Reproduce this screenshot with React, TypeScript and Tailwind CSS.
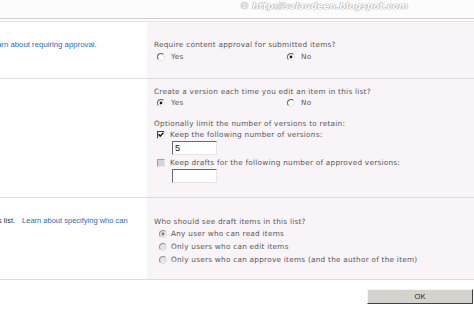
import React from "react";

function Radio({ checked, disabled }: { checked?: boolean; disabled?: boolean }) {
  const dark = disabled ? "#9a9a9a" : "#6f6f6f";
  const dot = disabled ? "#7a7a7a" : "#1a1a1a";
  return (
    <svg width="8" height="8" viewBox="0 0 8 8" className="shrink-0">
      <circle cx="4" cy="4" r="3.5" fill={disabled ? "#e8e4e6" : "#ffffff"} />
      <path d="M6.5 1.5 A3.5 3.5 0 0 0 1.5 6.5" fill="none" stroke={dark} strokeWidth="1.2" />
      <path d="M1.5 6.5 A3.5 3.5 0 0 0 6.5 1.5" fill="none" stroke="#e4e0e2" strokeWidth="1" />
      {checked && <circle cx="4" cy="4" r="1.4" fill={dot} />}
    </svg>
  );
}

function Check({ checked, disabled }: { checked?: boolean; disabled?: boolean }) {
  return (
    <svg width="8" height="8" viewBox="0 0 8 8" className="shrink-0">
      <rect x="0" y="0" width="8" height="8" fill={disabled ? "#d8d4d6" : "#ffffff"} />
      <path d="M0.5 7.5 V0.5 H7.5" fill="none" stroke={disabled ? "#a0a0a0" : "#404040"} strokeWidth="1.2" />
      <path d="M0.5 7.5 H7.5 V0.5" fill="none" stroke="#e8e8e8" strokeWidth="1" />
      {checked && <path d="M1.6 3.2 L3.2 5.2 L6.4 1.8" fill="none" stroke="#111" strokeWidth="1.4" />}
    </svg>
  );
}

function TextBox({ value }: { value?: string }) {
  return (
    <div className="w-[45px] h-[14px] bg-white border-t border-l border-t-[#6a6a6a] border-l-[#6a6a6a] border-b border-r border-b-[#e6e6e6] border-r-[#e6e6e6] flex items-center pl-[2px] text-[9px] leading-none text-[#111] font-['Liberation_Sans',sans-serif]">
      {value}
    </div>
  );
}

export default function App() {
  const right = "font-['DejaVu_Sans',Verdana,sans-serif] text-[7.3px] tracking-[0.25px] text-[#585858] leading-none whitespace-nowrap";
  const dis = "text-[#9c9c9c]";
  const left = "font-['Liberation_Sans',Arial,sans-serif] leading-none";
  return (
    <div className="w-[474px] h-[310px] bg-white overflow-hidden relative">
      {/* header */}
      <div className="h-[18px] bg-[#fdfcfd] flex items-start pl-[240px] pt-[1px]">
        <span className="font-['DejaVu_Sans',sans-serif] italic font-bold text-[9px] leading-[10px] text-white [text-shadow:0_0_1px_#8a8a8a,0_0_1px_#8a8a8a] whitespace-nowrap">
          © http://salaudeen.blogspot.com
        </span>
      </div>
      <div className="h-[1px] bg-[#cfcfcf]" />
      <div className="h-[2px] bg-white" />
      <div className="h-[1px] bg-[#e4e4e4]" />

      {/* Row 1 */}
      <div className="flex h-[57px] border-b border-[#dcdcdc]">
        <div className="w-[147px] shrink-0 pt-[19px] overflow-hidden">
          <div className={`${left} text-[7.8px] text-[#2f6db0] -ml-[3px] whitespace-nowrap`}>arn about requiring approval.</div>
        </div>
        <div className="flex-1 bg-[#f8f4f7] pl-[7px] pt-[17px]">
          <div className={`${right} h-[12px] flex items-center`}>Require content approval for submitted items?</div>
          <div className={`${right} h-[12px] flex items-center`}>
            <div className="w-[133px] flex items-center pl-[3px] gap-[6px]">
              <Radio />
              <span>Yes</span>
            </div>
            <div className="flex items-center gap-[6px]">
              <Radio checked />
              <span>No</span>
            </div>
          </div>
        </div>
      </div>

      {/* Row 2 */}
      <div className="flex h-[119px] border-b border-[#dcdcdc]">
        <div className="w-[147px] shrink-0" />
        <div className="flex-1 bg-[#f8f4f7] pl-[7px] pt-[7px]">
          <div className={`${right} h-[11px] flex items-center`}>Create a version each time you edit an item in this list?</div>
          <div className={`${right} h-[11px] flex items-center`}>
            <div className="w-[133px] flex items-center pl-[3px] gap-[6px]">
              <Radio checked />
              <span>Yes</span>
            </div>
            <div className="flex items-center gap-[6px]">
              <Radio />
              <span>No</span>
            </div>
          </div>
          <div className={`${right} h-[11px] flex items-center mt-[10px]`}>Optionally limit the number of versions to retain:</div>
          <div className={`${right} h-[11px] flex items-center pl-[3px] gap-[5px]`}>
            <Check checked />
            <span>Keep the following number of versions:</span>
          </div>
          <div className="pl-[18px] mt-[1px]">
            <TextBox value="5" />
          </div>
          <div className={`${right} ${dis} h-[11px] flex items-center pl-[3px] gap-[5px] mt-[2px]`}>
            <Check disabled />
            <span>Keep drafts for the following number of approved versions:</span>
          </div>
          <div className="pl-[18px] mt-[1px]">
            <TextBox />
          </div>
        </div>
      </div>

      {/* Row 3 */}
      <div className="flex h-[82px] border-b border-[#dcdcdc]">
        <div className="w-[147px] shrink-0 pt-[19px] overflow-hidden">
          <div className={`${left} text-[7.5px] whitespace-nowrap -ml-[2px]`}>
            <span className="text-[#333]">s list.</span>
            <span className="text-[#2f6db0] ml-[7px]">Learn about specifying who can</span>
          </div>
        </div>
        <div className="flex-1 bg-[#f8f4f7] pl-[7px] pt-[18px]">
          <div className={`${right} h-[11px] flex items-center`}>Who should see draft items in this list?</div>
          <div className={`${right} ${dis} h-[13px] flex items-center pl-[5px] gap-[4px]`}>
            <Radio checked disabled />
            <span>Any user who can read items</span>
          </div>
          <div className={`${right} ${dis} h-[13px] flex items-center pl-[5px] gap-[4px]`}>
            <Radio disabled />
            <span>Only users who can edit items</span>
          </div>
          <div className={`${right} ${dis} h-[13px] flex items-center pl-[5px] gap-[4px]`}>
            <Radio disabled />
            <span>Only users who can approve items (and the author of the item)</span>
          </div>
        </div>
      </div>

      {/* Footer */}
      <div className="flex justify-end pt-[9px] pr-[1px]">
        <button className="w-[106px] h-[15px] bg-[#d6d3ce] border border-t-[#f4f4f4] border-l-[#f4f4f4] border-b-[#404040] border-r-[#404040] font-['Liberation_Sans',Arial,sans-serif] text-[7.5px] leading-none text-[#222] flex items-center justify-center">
          OK
        </button>
      </div>
    </div>
  );
}
